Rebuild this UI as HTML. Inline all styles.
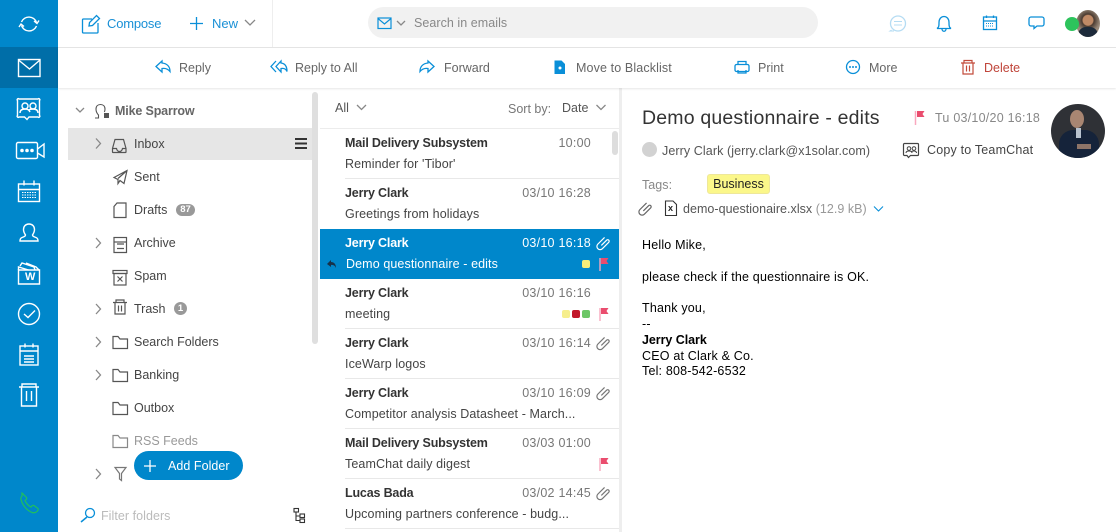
<!DOCTYPE html>
<html><head><meta charset="utf-8">
<style>
html,body{margin:0;padding:0}
body{width:1116px;height:532px;overflow:hidden;position:relative;background:#fff;font-family:"Liberation Sans",sans-serif;font-size:13px;color:#444}
.t{position:absolute;white-space:nowrap;line-height:16px;transform-origin:0 50%}
.b{position:absolute}
svg{position:absolute;overflow:visible;fill:none}
.w{stroke:#fff;stroke-width:1.4}
.g{stroke:#555;stroke-width:1.2}
.bl{stroke:#0a8fd8;stroke-width:1.3}
.ch{stroke:#888;stroke-width:1.3}
.n{font-weight:bold;color:#333;font-size:12.5px;letter-spacing:-.17px}
.s{font-size:12.5px;color:#444;letter-spacing:.1px}
.d{font-size:12.5px;color:#777;letter-spacing:.25px}
.f{font-size:12.5px;color:#444;letter-spacing:0}
.tb{font-size:12.5px;color:#666}
.l{position:absolute;left:345px;width:274px;height:1px;background:#e8e8e8}
.m{font-size:12.5px;color:#000;letter-spacing:.19px}
</style></head><body>

<!-- sidebar -->
<div class="b" style="left:0;top:0;width:58px;height:532px;background:#0087cb"></div>
<div class="b" style="left:0;top:47px;width:58px;height:41px;background:#006ea8"></div>
<svg style="left:0;top:0" width="58" height="532">
<g class="w">
<path transform="translate(0,1)" d="M21.500 21a8 8 0 0 1 15 .5M36.500 25a8 8 0 0 1-15-.5"/><path transform="translate(0,1)" d="M34 20l3 2.500 2-3M19 26l2-3 3 2.500"/>
<rect x="18.500" y="59.500" width="21.500" height="17"/><path d="M18.500 60l11 9 10.500-9"/>
<path d="M19 99h19a1 1 0 0 1 1.500 1.500v15a1 1 0 0 1-1.500 1.500h-9l-2 2.500-2.500-2.500h-5.500a1 1 0 0 1-1.500-1.500v-15a1 1 0 0 1 1.500-1.500z"/>
<circle cx="25" cy="106" r="3"/><circle cx="33" cy="106" r="3"/><path d="M20 113c0-3 2-4 5-4s4 1 5 3M29 110c1-1 2-1 4-1 3 0 5 1 5 4"/>
<rect x="16.500" y="142.500" width="21" height="16" rx="1.500"/><path d="M37.500 149l6.500-5v13l-6.500-4"/>
<rect x="18.500" y="184" width="21" height="17.500"/><path d="M18.500 189.500h21M24 180.500v5M34 180.500v5"/>
<path d="M29 224c-3.500 0-5.500 2.500-5.500 5.500 0 2.500 1 4 2 5.500 0 1.500-2 2-3.500 2.500-1.500.5-2 2-2 3.500h18c0-1.500-.5-3-2-3.500-1.500-.5-3.500-1-3.500-2.500 1-1.500 2-3 2-5.500 0-3-2-5.500-5.500-5.500z"/>
<path d="M18.500 270v14h21v-14z"/><path d="M18.500 270v-3l10 3M20 266l2-3 12 4 1 3M26 263l10 4 3 3"/>
<circle cx="29" cy="314" r="10.500"/><path d="M24 314l4 3.500 7-7"/>
<rect x="20" y="346" width="18" height="19"/><path d="M20 351h18M25 343.500v4M33 343.500v4M24 356h10M24 359h10M24 362h10"/>
<path d="M19 387h20M22 387v-3h14v3M21.500 387v19h15v-19M26.500 391v10M31.500 391v10"/>
</g>
<g fill="#fff"><circle cx="22" cy="150.500" r="1.800"/><circle cx="27" cy="150.500" r="1.800"/><circle cx="32" cy="150.500" r="1.800"/></g>
<g stroke="#fff" stroke-width="1.100" stroke-dasharray="1.500 1"><path d="M22 192.500h14M22 195h14M22 197.500h14"/></g>
<path d="M22 496c-1 1-1.500 2-1 3.500 1.500 6 6 11 11 13 2 .5 3.500.5 5-1 1-1 1.500-2 1-3l-4-3c-1-.5-2 0-3 1.500-2.500-1-5-4-6-6.500 1.500-1 2-2 1.500-3l-3-3c0 0-.5-1-1.500-1.500z" stroke="#20c05c" stroke-width="1.200"/>
</svg>
<div class="t" style="left:29px;top:269px;font-size:11px;font-weight:bold;color:#fff;transform:translateX(-4px)">W</div>

<!-- top bar -->
<div class="b" style="left:58px;top:47px;width:1058px;height:1px;background:#e6e6e6"></div>
<div class="b" style="left:272px;top:0;width:1px;height:47px;background:#eee"></div>
<div class="b" style="left:58px;top:48px;width:1058px;height:40px;background:#fff;box-shadow:0 1px 2px rgba(0,0,0,.1);z-index:1"></div>
<svg style="left:58px;top:0" width="240" height="47"><g class="bl">
<path d="M34 19h-8.500a1 1 0 0 0-1 1v12a1 1 0 0 0 1 1h13.500a1 1 0 0 0 1-1v-9"/><path d="M31 26l.5-3.500 7-7 3 3-7 7z"/>
<path d="M138.500 17v13M132 23.500h13"/></g><path d="M187 20l5 5 5-5" class="ch"/></svg>
<div class="t" style="left:107px;top:16px;color:#1a90d6;font-size:13px;letter-spacing:-.2px">Compose</div>
<div class="t" style="left:212px;top:16px;color:#1a90d6;font-size:13px;font-weight:normal">New</div>

<!-- search -->
<div class="b" style="left:368px;top:7px;width:450px;height:31px;border-radius:16px;background:#f1f1f1"></div>
<svg style="left:376px;top:15px" width="40" height="16"><rect x="2" y="3" width="13" height="10.500" stroke="#0a8fd8" stroke-width="1.200"/><path d="M2 3.500l6.500 5.500 6.500-5.500" stroke="#0a8fd8" stroke-width="1.200"/><path d="M21 6l4 4 4-4" class="ch"/></svg>
<div class="t" style="left:414px;top:15px;color:#888;font-size:12.5px;letter-spacing:.05px">Search in emails</div>

<!-- top right icons -->
<svg style="left:880px;top:10px" width="236" height="30">
<circle cx="18" cy="13.500" r="7.500" stroke="#b5dcf3" stroke-width="1.300"/><path d="M14 11.500h8M14 15h8" stroke="#b5dcf3" stroke-width="1"/><path d="M11.500 20l-1.500 1h4" stroke="#b5dcf3"/>
<g class="bl"><path d="M57 18.500c2-1 2-3 2-6 0-3.500 2-6 5-6s5 2.500 5 6c0 3 0 5 2 6z"/><path d="M62 19c0 3 4 3 4 0"/>
<rect x="103.500" y="7" width="13" height="12.500"/><path d="M103.500 11h13M106.500 5.500v2.500M113.500 5.500v2.500"/>
<path d="M151 7h11a2 2 0 0 1 2 2v5a2 2 0 0 1-2 2h-5l-3 2.500v-2.500h-3a2 2 0 0 1-2-2v-5a2 2 0 0 1 2-2z"/></g>
<path d="M106 13.500h8M106 16h8" stroke="#0a8fd8" stroke-dasharray="1 1"/>
</svg>
<div class="b" style="left:1076px;top:10px;width:24px;height:27px;border-radius:50%;background:radial-gradient(circle at 50% 38%,#c08a66 0 5px,#4a3a30 6px,#9a8a7a 12px);overflow:hidden"><div class="b" style="left:2px;top:17px;width:20px;height:10px;background:#1c2a3a;border-radius:8px 8px 0 0"></div></div>
<div class="b" style="left:1065px;top:17px;width:14px;height:14px;border-radius:50%;background:#2dc35c"></div>

<!-- toolbar -->
<svg style="left:150px;top:56px;z-index:2" width="890" height="24">
<g class="bl">
<path d="M12 5L6 10.500 12 16v-3.500c3-.5 6 .5 8 3 0-5-3-8-8-8.500z"/>
<path d="M126 5l-5 5.500 5 5.500M131 5l-5 5.500 5 5.500v-3.500c3-.5 5 .5 6 3 0-5-2-8-6-8.500z"/>
<path d="M278 5l6 5.500-6 5.500v-3.500c-3-.5-6 .5-8 3 0-5 3-8 8-8.500z"/>
<rect x="585" y="8.500" width="14" height="7" rx="1.500"/><path d="M588 8v-2.500h8v2.500M588 14v3h8v-3"/>
<circle cx="703" cy="11" r="6.500"/>
</g>
<path d="M404.500 4.500h7l3.500 3.500v10h-10.500z" fill="#0a8fd8"/><circle cx="410" cy="12" r="1.500" fill="#fff"/>
<g fill="#0a8fd8"><circle cx="700" cy="11" r="1"/><circle cx="703" cy="11" r="1"/><circle cx="706" cy="11" r="1"/></g>
<path d="M811 7h14M814 7v-2.500h8v2.500M813 7v11h10v-11M816.500 9.500v6M819.500 9.500v6" stroke="#c24a3a" stroke-width="1.200"/>
</svg>
<div class="t tb" style="left:179px;top:60px;z-index:2">Reply</div>
<div class="t tb" style="left:295px;top:60px;z-index:2">Reply to All</div>
<div class="t tb" style="left:444px;top:60px;z-index:2">Forward</div>
<div class="t tb" style="left:576px;top:60px;z-index:2;letter-spacing:.12px">Move to Blacklist</div>
<div class="t tb" style="left:758px;top:60px;z-index:2">Print</div>
<div class="t tb" style="left:869px;top:60px;z-index:2">More</div>
<div class="t tb" style="left:984px;top:60px;z-index:2;color:#c0453a">Delete</div>

<!-- folder pane -->
<div class="b" style="left:68px;top:128px;width:250px;height:32px;background:#e6e6e6"></div>
<div class="b" style="left:312px;top:92px;width:6px;height:252px;background:#dfdfdf;border-radius:3px"></div>
<svg style="left:58px;top:90px" width="262" height="442">
<path d="M18 18l4 4 4-4" class="ch"/>
<path d="M37 28h3.500v-3c-1.500-1.500-2.500-3.500-2.500-6 0-3 2-4.500 4.500-4.500s4.500 1.500 4.500 4.500c0 1-.2 2-.6 3M44.500 25v-0" stroke="#555" stroke-width="1.100"/><rect x="46" y="23" width="5" height="5" fill="#555"/>
<path d="M38 48.500l4.500 5-4.500 5M38 148l4.500 5-4.500 5M38 214l4.500 5-4.500 5M38 247l4.500 5-4.500 5M38 280l4.500 5-4.500 5M38 379l4.500 5-4.500 5" class="ch"/>
<g class="g" transform="translate(2,0.500)">
<path d="M55 49l-2.500 9v3.500a.5.5 0 0 0 .5.500h12.500a.5.500 0 0 0 .5-.5v-3.500l-2.500-9zM52.500 58h4c.5 2.500 1.500 3 3 3s2.500-.5 3-3h4"/>
<path d="M54 87l13-7-3 13-4-3-2 3v-4zM67 80l-9 8"/>
<path d="M57 112.500l-3 3.500v11h12v-14.500z"/>
<rect x="54" y="147" width="12.500" height="4.500"/><path d="M54 152v10h12.500v-10M57 153.500h7M57 158h7"/>
<rect x="53" y="180" width="14" height="3"/><rect x="54" y="183" width="12" height="11.500"/><path d="M57.500 186l5 5M62.500 186l-5 5"/>
<path d="M53 212h14M56 212v-2.500h8v2.500M55 212v11.500h10v-11.500M58.500 215v6M61.500 215v6"/>
<path d="M53 246h5l2 2.500h7.500v9.500h-14.500z"/>
<path d="M53 279h5l2 2.500h7.500v9.500h-14.500z"/>
<path d="M53 312h5l2 2.500h7.500v9.500h-14.500z"/>
<path d="M53 345h5l2 2.500h7.500v9.500h-14.500z" stroke="#888"/>
<path d="M55 377h11l-4.500 6v7l-2-1.500v-5.500z" stroke="#777"/>
</g>
<circle cx="32" cy="423" r="4.500" stroke="#0a8fd8" stroke-width="1.300"/><path d="M29 427l-6 5" stroke="#0a8fd8" stroke-width="1.500"/>
<g stroke="#333" stroke-width="1.100"><rect x="236" y="418.500" width="4.500" height="3.500"/><rect x="242" y="424" width="4.500" height="3.500" /><rect x="242" y="429" width="4.500" height="3.500"/><path d="M238 422v8.500h4M238 426h4"/></g>
</svg>
<div class="t" style="left:115px;top:103px;font-weight:bold;color:#666;font-size:12.500px;letter-spacing:-.15px">Mike Sparrow</div>
<div class="b" style="left:295px;top:138px;width:12px;height:2px;background:#333;box-shadow:0 4.500px 0 #333,0 9px 0 #333"></div>
<div class="t f" style="left:134px;top:136px">Inbox</div>
<div class="t f" style="left:134px;top:169px">Sent</div>
<div class="t f" style="left:134px;top:202px">Drafts</div>
<div class="b" style="left:176px;top:204px;width:19px;height:12px;border-radius:6px;background:#999;color:#fff;font-size:9.500px;font-weight:bold;text-align:center;line-height:12px">87</div>
<div class="t f" style="left:134px;top:235px">Archive</div>
<div class="t f" style="left:134px;top:268px">Spam</div>
<div class="t f" style="left:134px;top:301px">Trash</div>
<div class="b" style="left:174px;top:302px;width:13px;height:13px;border-radius:50%;background:#999;color:#fff;font-size:9.500px;font-weight:bold;text-align:center;line-height:13px">1</div>
<div class="t f" style="left:134px;top:334px">Search Folders</div>
<div class="t f" style="left:134px;top:367px">Banking</div>
<div class="t f" style="left:134px;top:400px">Outbox</div>
<div class="t f" style="left:134px;top:433px;color:#999">RSS Feeds</div>
<div class="b" style="left:134px;top:451px;width:109px;height:29px;border-radius:15px;background:#0087cb"></div>
<svg style="left:142px;top:458px" width="20" height="16"><path d="M6 2v12M0 8h12" stroke="#fff" stroke-width="1.300" transform="translate(2,0)"/></svg>
<div class="t" style="left:168px;top:458px;color:#fff;font-size:12.500px;letter-spacing:.05px">Add Folder</div>
<div class="t" style="left:101px;top:508px;color:#bbb;font-size:12.500px;letter-spacing:.05px">Filter folders</div>

<!-- message list -->
<div class="b" style="left:619px;top:88px;width:3px;height:444px;background:#eee"></div>
<div class="t" style="left:335px;top:100px;font-size:12.500px;color:#555">All</div>
<div class="t" style="left:508px;top:101px;font-size:12.500px;color:#777">Sort by:</div>
<div class="t" style="left:562px;top:100px;font-size:12.500px;color:#555">Date</div>
<svg style="left:320px;top:100px" width="300" height="16"><path d="M37 5l4.500 4.500 4.500-4.500M276.500 5l4.500 4.500 4.500-4.500" class="ch"/></svg>
<div class="b" style="left:320px;top:128px;width:299px;height:1px;background:#ececec"></div>
<div class="b" style="left:612px;top:131px;width:6px;height:24px;background:#ddd;border-radius:3px"></div>

<div class="b" style="left:320px;top:229px;width:299px;height:50px;background:#0087cb"></div>
<div class="l" style="top:178px"></div>
<div class="l" style="top:328px"></div>
<div class="l" style="top:378px"></div>
<div class="l" style="top:428px"></div>
<div class="l" style="top:478px"></div>
<div class="l" style="top:528px"></div>

<div class="t n" style="left:345px;top:135px">Mail Delivery Subsystem</div><div class="t d" style="right:525px;top:135px">10:00</div><div class="t s" style="left:345px;top:156px">Reminder for 'Tibor'</div>
<div class="t n" style="left:345px;top:185px">Jerry Clark</div><div class="t d" style="right:525px;top:185px">03/10 16:28</div><div class="t s" style="left:345px;top:206px">Greetings from holidays</div>
<div class="t n" style="left:345px;top:235px;color:#fff">Jerry Clark</div><div class="t d" style="right:525px;top:235px;color:#fff">03/10 16:18</div><div class="t s" style="left:346px;top:256px;color:#fff">Demo questionnaire - edits</div>
<div class="t n" style="left:345px;top:285px">Jerry Clark</div><div class="t d" style="right:525px;top:285px">03/10 16:16</div><div class="t s" style="left:345px;top:306px">meeting</div>
<div class="t n" style="left:345px;top:335px">Jerry Clark</div><div class="t d" style="right:525px;top:335px">03/10 16:14</div><div class="t s" style="left:345px;top:356px">IceWarp logos</div>
<div class="t n" style="left:345px;top:385px">Jerry Clark</div><div class="t d" style="right:525px;top:385px">03/10 16:09</div><div class="t s" style="left:345px;top:406px">Competitor analysis Datasheet - March...</div>
<div class="t n" style="left:345px;top:435px">Mail Delivery Subsystem</div><div class="t d" style="right:525px;top:435px">03/03 01:00</div><div class="t s" style="left:345px;top:456px">TeamChat daily digest</div>
<div class="t n" style="left:345px;top:485px">Lucas Bada</div><div class="t d" style="right:525px;top:485px">03/02 14:45</div><div class="t s" style="left:345px;top:506px">Upcoming partners conference - budg...</div>

<svg style="left:320px;top:229px" width="300" height="303">
<g stroke-width="1.200" stroke="#777">
<path transform="translate(284,13.500) rotate(-45)" stroke="#fff" d="M-4 .2h7.500a1.500 1.500 0 0 1 0 3h-9a3.200 3.200 0 0 1 0-6.400h9.500"/>
<path transform="translate(284,113.500) rotate(-45)" d="M-4 .2h7.500a1.500 1.500 0 0 1 0 3h-9a3.200 3.200 0 0 1 0-6.400h9.500"/>
<path transform="translate(284,163.500) rotate(-45)" d="M-4 .2h7.500a1.500 1.500 0 0 1 0 3h-9a3.200 3.200 0 0 1 0-6.400h9.500"/>
<path transform="translate(284,263.500) rotate(-45)" d="M-4 .2h7.500a1.500 1.500 0 0 1 0 3h-9a3.200 3.200 0 0 1 0-6.400h9.500"/>
</g>
<path d="M11 31l-4 4 4 3v-2c2-.5 4 .5 5 3 0-4-2-6-5-6z" fill="#17324a"/>
<rect x="262" y="31" width="8" height="8" rx="2" fill="#f6ee7a"/>
<path d="M280 29v13" stroke="#f7a8bd" stroke-width="1.400"/><path d="M281 29h7.500l-2 3 2 3h-7.500z" fill="#ea4d6e"/>
<rect x="242" y="81" width="8" height="8" rx="2" fill="#f6ee8c"/><rect x="252" y="81" width="8" height="8" rx="2" fill="#c2182b"/><rect x="262" y="81" width="8" height="8" rx="2" fill="#6cc766"/>
<path d="M280 79v13" stroke="#f7a8bd" stroke-width="1.400"/><path d="M281 79h7.500l-2 3 2 3h-7.500z" fill="#ea4d6e"/>
<path d="M280 229v13" stroke="#f7a8bd" stroke-width="1.400"/><path d="M281 229h7.500l-2 3 2 3h-7.500z" fill="#ea4d6e"/>
</svg>

<!-- reading pane -->
<div class="t" style="left:642px;top:106px;font-size:19.500px;line-height:24px;color:#333;letter-spacing:.18px">Demo questionnaire - edits</div>
<svg style="left:912px;top:108px" width="16" height="20"><path d="M3.500 3v14" stroke="#f9a8bf" stroke-width="1.500"/><path d="M5 3h7.500l-2 3 2 3h-7.500z" fill="#ea4d6e"/></svg>
<div class="t" style="left:935px;top:110px;font-size:12.500px;color:#888;letter-spacing:.24px">Tu 03/10/20 16:18</div>
<div class="b" style="left:1051px;top:104px;width:54px;height:54px;border-radius:50%;background:#2f3136;overflow:hidden">
<div class="b" style="left:8px;top:26px;width:40px;height:34px;border-radius:14px 14px 0 0;background:#15233a"></div>
<div class="b" style="left:19px;top:6px;width:14px;height:18px;border-radius:50%;background:#a98672"></div>
<div class="b" style="left:25px;top:24px;width:5px;height:10px;background:#b7c2cf"></div>
<div class="b" style="left:26px;top:40px;width:14px;height:5px;background:#8d7468"></div>
</div>
<div class="b" style="left:642px;top:142px;width:15px;height:15px;border-radius:50%;background:#d2d2d2"></div>
<div class="t" style="left:662px;top:143px;font-size:12.500px;color:#555;letter-spacing:.09px">Jerry Clark (jerry.clark@x1solar.com)</div>
<svg style="left:903px;top:142px" width="18" height="18"><path d="M2.500 1.500h12a1 1 0 0 1 1 1v10a1 1 0 0 1-1 1h-7l-2 2-1.500-2h-2.500a1 1 0 0 1-1-1v-10a1 1 0 0 1 1-1z" stroke="#444" stroke-width="1.200"/><circle cx="6" cy="6.500" r="1.800" stroke="#444"/><circle cx="11" cy="6.500" r="1.800" stroke="#444"/><path d="M3 11c0-1.500 1-2 3-2s3 .5 3 2M8.500 9.500c2.500-1 5-.5 5 1.500" stroke="#444"/></svg>
<div class="t" style="left:927px;top:142px;font-size:12.500px;color:#444;letter-spacing:.19px">Copy to TeamChat</div>
<div class="t" style="left:642px;top:177px;font-size:12.500px;color:#888;letter-spacing:.05px">Tags:</div>
<div class="b" style="left:707px;top:174px;width:61px;height:18px;background:#fbf78a;border:1px solid #eee79a;border-radius:3px;font-size:12.500px;color:#222;line-height:18px;text-align:center">Business</div>
<svg style="left:638px;top:199px" width="60" height="18">
<path transform="translate(8,9) rotate(-45)" stroke="#666" stroke-width="1.200" d="M-4 .2h7.500a1.500 1.500 0 0 1 0 3h-9a3.200 3.200 0 0 1 0-6.400h9.500"/>
<path d="M27.500 2h7.500l3.500 3.500v11h-11z" stroke="#333" stroke-width="1.100"/>
</svg>
<div class="t" style="left:668px;top:203px;font-size:9px;font-weight:bold;line-height:10px;color:#222">x</div>
<div class="t" style="left:683px;top:201px;font-size:12.500px;color:#555;letter-spacing:.03px">demo-questionaire.xlsx <span style="color:#999">(12.9 kB)</span></div>
<svg style="left:873px;top:204px" width="12" height="10"><path d="M1 2.500l4.500 4.500 4.500-4.500" stroke="#0a8fd8" stroke-width="1.100"/></svg>

<div class="t m" style="left:642px;top:237px">Hello Mike,</div>
<div class="t m" style="left:642px;top:269px">please check if the questionnaire is OK.</div>
<div class="t m" style="left:642px;top:300px">Thank you,</div>
<div class="t m" style="left:642px;top:316px">--</div>
<div class="t m" style="left:642px;top:332px;font-weight:bold;letter-spacing:-.05px">Jerry Clark</div>
<div class="t m" style="left:642px;top:348px">CEO at Clark &amp; Co.</div>
<div class="t m" style="left:642px;top:363px">Tel: 808-542-6532</div>
</body></html>
